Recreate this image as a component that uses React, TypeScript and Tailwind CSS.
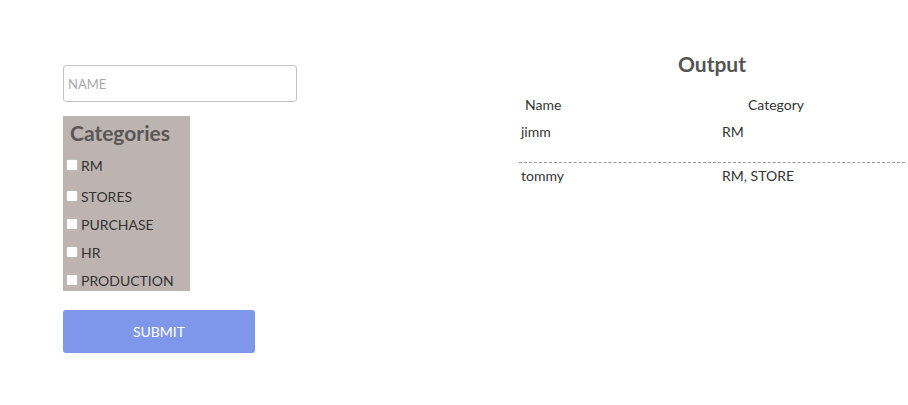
import { useState } from 'react'

const CATEGORIES = ['RM', 'STORES', 'PURCHASE', 'HR', 'PRODUCTION']

const ROWS = [
  { name: 'jimm', category: 'RM' },
  { name: 'tommy', category: 'RM, STORE' },
]

export default function App() {
  const [name, setName] = useState('')

  return (
    <div className="flex w-[908px] h-[405px] bg-white" style={{ fontFamily: 'Lato, "Open Sans", sans-serif' }}>
      {/* Form */}
      <div className="w-[519px] pl-[63px] pt-[65px]">
        <input
          value={name}
          onChange={(e) => setName(e.target.value)}
          placeholder="NAME"
          className="block w-[234px] h-[37px] rounded-[3px] border border-[#c4c4c4] px-[4px] text-[13px] text-[#333] placeholder:text-[#a9a9a9] outline-none"
        />

        <div className="mt-[14px] w-[127px] h-[175px] bg-[#bdb3b1] pt-[4px]">
          <h3 className="pl-[7px] text-[21px] font-bold leading-[26px] text-[#5a5656]">Categories</h3>
          <div className="mt-[5px] flex flex-col">
            {CATEGORIES.map((c, i) => (
              <label
                key={c}
                className={`flex h-[28px] items-center pl-[3px] text-[14px] text-[#333] ${i === 1 ? 'mt-[3px]' : ''}`}
              >
                <span className="mr-[3px] block w-[12px] h-[12px] rounded-[2px] bg-white border border-[#bbb]" />
                {c}
              </label>
            ))}
          </div>
        </div>

        <button className="mt-[19px] w-[192px] h-[43px] rounded-[3px] bg-[#7f97ea] text-[14px] text-white">
          SUBMIT
        </button>
      </div>

      {/* Output */}
      <div className="w-[386px] pt-[51px]">
        <h2 className="text-center text-[21px] font-bold leading-[26px] text-[#555]">Output</h2>
        <div className="mt-[17px] flex h-[20px] items-center text-[14px] text-[#333]">
          <span className="w-[203px] pl-[6px]">Name</span>
          <span className="pl-[26px]">Category</span>
        </div>
        {ROWS.map((r, i) => (
          <div
            key={r.name}
            className={`flex text-[14px] text-[#333] ${i === 0 ? 'h-[49px] pt-[9px] border-b border-dashed border-[#999]' : 'pt-[4px]'}`}
          >
            <span className="w-[203px] pl-[2px] leading-[17px]">{r.name}</span>
            <span className="leading-[17px]">{r.category}</span>
          </div>
        ))}
      </div>
    </div>
  )
}
